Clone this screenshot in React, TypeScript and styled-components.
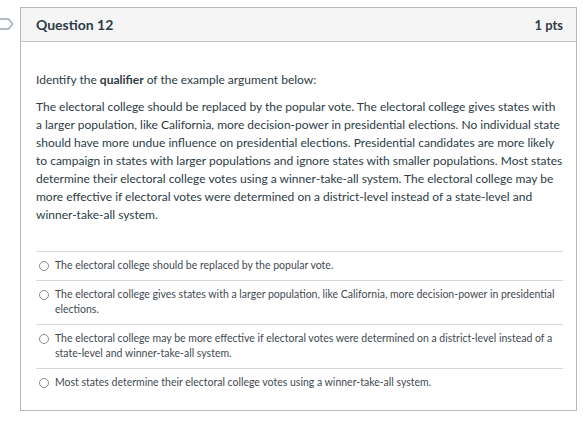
import React from "react";
import styled, { createGlobalStyle } from "styled-components";

const Global = createGlobalStyle`
  html, body { margin: 0; padding: 0; background: #ffffff; }
  body { font-family: Lato, "Open Sans", "Liberation Sans", sans-serif; color: #2d3b45; }
  * { box-sizing: border-box; }
`;

const Page = styled.div`
  display: flex;
  align-items: flex-start;
  padding-top: 7px;
`;

const FlagCol = styled.div`
  width: 20px;
  flex: none;
  padding-top: 11px;
  display: flex;
`;

const Card = styled.div`
  width: 557px;
  border: 1px solid #b8b8b8;
  background: #fff;
`;

const Header = styled.div`
  height: 34px;
  background: #f5f5f5;
  border-bottom: 1px solid #c4c4c4;
  display: flex;
  align-items: center;
  justify-content: space-between;
  padding: 0 13px 0 15px;
`;

const Title = styled.div`
  font-size: 14px;
  font-weight: 700;
  color: #2d3b45;
`;

const Points = styled.div`
  font-size: 13px;
  font-weight: 700;
  color: #2d3b45;
`;

const Body = styled.div`
  padding: 29px 13px 13px 15px;
`;

const Para = styled.p<{ $gap?: number }>`
  margin: 0 0 ${(p) => p.$gap ?? 9}px;
  font-size: 12px;
  line-height: 18px;
  color: #2d3b45;
`;

const Answers = styled.div`
  margin-top: 27px;
  display: flex;
  flex-direction: column;
`;

const Answer = styled.div`
  border-top: 1px solid #d9d9d9;
  padding: 6px 0 7px;
  display: flex;
  align-items: flex-start;
`;

const Radio = styled.span`
  flex: none;
  width: 10px;
  height: 10px;
  margin: 2.5px 6px 0 3px;
  border: 1px solid #8c8c8c;
  border-radius: 50%;
  background: #fff;
`;

const AnswerText = styled.div`
  font-size: 10.5px;
  line-height: 15px;
  color: #3f4a52;
  flex: 1;
`;

const answers = [
  "The electoral college should be replaced by the popular vote.",
  "The electoral college gives states with a larger population, like California, more decision-power in presidential elections.",
  "The electoral college may be more effective if electoral votes were determined on a district-level instead of a state-level and winner-take-all system.",
  "Most states determine their electoral college votes using a winner-take-all system.",
];

export default function App() {
  return (
    <>
      <Global />
      <Page>
        <FlagCol>
          <svg width="14" height="12" viewBox="0 0 14 12">
            <path
              d="M-4 1 H8.5 L12.5 6 L8.5 11 H-4"
              fill="none"
              stroke="#9aa7b2"
              strokeWidth="1.3"
              strokeLinejoin="round"
            />
          </svg>
        </FlagCol>
        <Card>
          <Header>
            <Title>Question 12</Title>
            <Points>1 pts</Points>
          </Header>
          <Body>
            <Para>
              Identify the <b>qualifier</b> of the example argument below:
            </Para>
            <Para $gap={0}>
              The electoral college should be replaced by the popular vote. The electoral college gives
              states with a larger population, like California, more decision-power in presidential
              elections. No individual state should have more undue influence on presidential elections.
              Presidential candidates are more likely to campaign in states with larger populations and
              ignore states with smaller populations. Most states determine their electoral college votes
              using a winner-take-all system. The electoral college may be more effective if electoral
              votes were determined on a district-level instead of a state-level and winner-take-all
              system.
            </Para>
            <Answers>
              {answers.map((a) => (
                <Answer key={a}>
                  <Radio />
                  <AnswerText>{a}</AnswerText>
                </Answer>
              ))}
            </Answers>
          </Body>
        </Card>
      </Page>
    </>
  );
}
